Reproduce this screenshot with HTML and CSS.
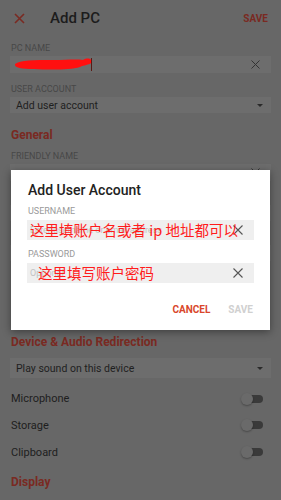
FILE: index.html
```html
<!DOCTYPE html>
<html lang="en">
<head>
    <meta charset="UTF-8">
    <meta name="viewport" content="width=device-width, initial-scale=1.0">
    <title>Add PC</title>
    <link rel="stylesheet" href="styles.css">
</head>
<body>
    <div class="screen">
        <div class="header">
            <svg class="close" width="11" height="11" viewBox="0 0 11 11"><path d="M1 1L10 10M10 1L1 10" stroke="#7a2a22" stroke-width="1.6"/></svg>
            <div class="title">Add PC</div>
            <div class="save">SAVE</div>
        </div>

        <div class="form">
            <div class="label">PC NAME</div>
            <div class="field">
                <svg class="scribble" width="80" height="15" viewBox="0 0 80 15"><path d="M1 7C6 3 20 3 40 3C52 3 62 2 69 3C74 0 79 2 77 6C75 8 70 8 66 10C56 13 36 13 20 12C8 12 0 11 1 7Z" fill="#ff1010"/></svg>
                <span class="cursor"></span>
                <svg class="clear" width="9" height="9" viewBox="0 0 9 9"><path d="M0.5 0.5L8.5 8.5M8.5 0.5L0.5 8.5" stroke="#333" stroke-width="1"/></svg>
            </div>

            <div class="label">USER ACCOUNT</div>
            <div class="field select">
                <span>Add user account</span>
                <span class="caret"></span>
            </div>

            <div class="section">General</div>
            <div class="label">FRIENDLY NAME</div>
            <div class="field">
                <svg class="clear" width="9" height="9" viewBox="0 0 9 9"><path d="M0.5 0.5L8.5 8.5M8.5 0.5L0.5 8.5" stroke="#333" stroke-width="1"/></svg>
            </div>
            <div class="label">GROUP</div>
            <div class="field select"><span>Saved PCs</span><span class="caret"></span></div>
            <div class="label">GATEWAY</div>
            <div class="field select"><span>No gateway</span><span class="caret"></span></div>
            <div class="row">Connect to admin session<span class="toggle"></span></div>
            <div class="row">Swap mouse buttons<span class="toggle"></span></div>

            <div class="section device">Device &amp; Audio Redirection</div>
            <div class="field select tall">
                <span>Play sound on this device</span>
                <span class="caret"></span>
            </div>
            <div class="row">Microphone<span class="toggle"></span></div>
            <div class="row">Storage<span class="toggle"></span></div>
            <div class="row">Clipboard<span class="toggle"></span></div>

            <div class="section display">Display</div>
        </div>

        <div class="dialog">
            <div class="dialog-title">Add User Account</div>
            <div class="dlabel">USERNAME</div>
            <div class="dfield">
                <span class="placeholder">Enter username or email address</span>
                <span class="note">这里填账户名或者 ip 地址都可以</span>
                <svg class="clear" width="10" height="10" viewBox="0 0 10 10"><path d="M0.5 0.5L9.5 9.5M9.5 0.5L0.5 9.5" stroke="#555" stroke-width="1.1"/></svg>
            </div>
            <div class="dlabel pw">PASSWORD</div>
            <div class="dfield">
                <span class="placeholder">Optional</span>
                <span class="note note-pw">这里填写账户密码</span>
                <svg class="clear" width="10" height="10" viewBox="0 0 10 10"><path d="M0.5 0.5L9.5 9.5M9.5 0.5L0.5 9.5" stroke="#555" stroke-width="1.1"/></svg>
            </div>
            <div class="actions">
                <span class="cancel">CANCEL</span>
                <span class="disabled">SAVE</span>
            </div>
        </div>
    </div>
</body>
</html>
```

FILE: styles.css
```css
body {
    margin: 0;
    background-color: #676767;
    font-family: Roboto, 'Noto Sans', Arial, sans-serif;
}
.screen {
    position: relative;
    width: 281px;
    height: 500px;
    overflow: hidden;
}
.header {
    display: flex;
    align-items: center;
    height: 36px;
    padding: 0 13px 0 14px;
}
.close {
    display: block;
}
.title {
    margin-left: 25px;
    font-size: 15px;
    font-weight: 500;
    color: #1c1c1c;
    flex: 1;
}
.save {
    font-size: 10px;
    font-weight: bold;
    color: #7a2a22;
}
.form {
    padding: 0 10px;
}
.label {
    margin-top: 11px;
    padding-left: 1px;
    font-size: 9px;
    line-height: 10px;
    color: #474747;
}
.header + .form .label:first-child {
    margin-top: 7px;
}
.section + .label {
    margin-top: 9px;
}
.field {
    position: relative;
    display: flex;
    align-items: center;
    height: 17px;
    margin-top: 3px;
    padding: 0 11px 0 4px;
    background-color: #6d6d6d;
}
.select {
    height: 16px;
    justify-content: space-between;
    font-size: 10.5px;
    color: #1f1f1f;
    padding-left: 6px;
    padding-right: 8px;
}
.tall {
    height: 20px;
    margin-top: 9px;
    margin-bottom: 7px;
}
.scribble {
    display: block;
}
.cursor {
    width: 1px;
    height: 13px;
    margin-left: -3px;
    background-color: #5a1a14;
}
.clear {
    display: block;
    margin-left: auto;
}
.caret {
    width: 0;
    height: 0;
    border-left: 3px solid transparent;
    border-right: 3px solid transparent;
    border-top: 3px solid #2a2a2a;
}
.section {
    margin-top: 15px;
    font-size: 12px;
    font-weight: bold;
    line-height: 14px;
    color: #7a2a22;
    padding-left: 1px;
}
.device {
    margin-top: 21px;
}
.display {
    margin-top: 10px;
}
.row {
    display: flex;
    align-items: center;
    justify-content: space-between;
    height: 26.7px;
    font-size: 11px;
    color: #1e1e1e;
    padding-left: 1px;
}
.toggle {
    position: relative;
    width: 18px;
    height: 8px;
    margin-right: 8px;
    border-radius: 4px;
    background-color: #3a3a3a;
}
.toggle::before {
    content: '';
    position: absolute;
    left: -4px;
    top: -2px;
    width: 12px;
    height: 12px;
    border-radius: 50%;
    background-color: #6a6a6a;
    box-shadow: 0 1px 2px rgba(0, 0, 0, 0.3);
}
.dialog {
    position: absolute;
    left: 11px;
    top: 170px;
    width: 259px;
    height: 160px;
    box-sizing: border-box;
    padding: 11px 16px 0 16px;
    background-color: #fff;
    box-shadow: 0 2px 8px rgba(0, 0, 0, 0.4);
}
.dialog-title {
    padding-left: 1px;
    font-size: 14px;
    font-weight: 500;
    line-height: 18px;
    color: #222;
}
.dlabel {
    margin-top: 7px;
    padding-left: 1px;
    font-size: 9px;
    line-height: 10px;
    color: #9a9a9a;
}
.pw {
    margin-top: 9px;
}
.dfield {
    position: relative;
    display: flex;
    align-items: center;
    height: 20px;
    margin-top: 4px;
    padding: 0 11px 0 3px;
    background-color: #efefef;
}
.placeholder {
    font-size: 9px;
    color: #c4c4c4;
}
.note {
    position: absolute;
    left: 3px;
    top: 2px;
    font-family: 'Noto Sans CJK SC', sans-serif;
    font-size: 14.5px;
    line-height: 16px;
    color: #ff1c1c;
    white-space: nowrap;
}
.note-pw {
    left: 11px;
}
.actions {
    display: flex;
    justify-content: flex-end;
    gap: 18px;
    margin-top: 21px;
    padding-right: 1px;
    font-size: 10px;
    line-height: 12px;
    font-weight: bold;
}
.cancel {
    color: #d9472b;
}
.disabled {
    color: #d0d0d0;
}
```
